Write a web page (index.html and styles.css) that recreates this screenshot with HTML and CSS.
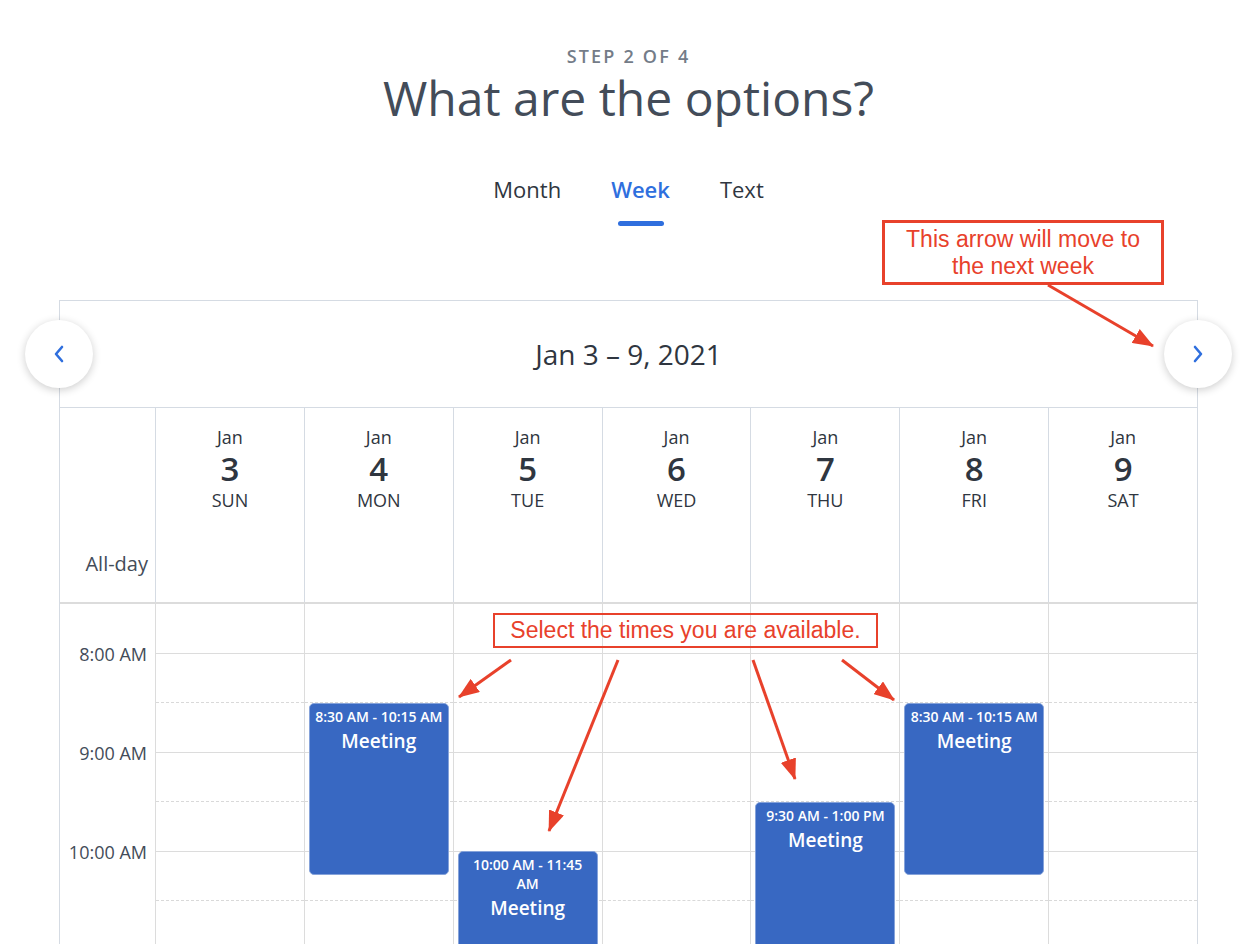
FILE: index.html
```html
<!DOCTYPE html>
<html lang="en">
<head>
<meta charset="utf-8">
<title>What are the options?</title>
<link rel="stylesheet" href="styles.css">
</head>
<body>
<div class="page">
  <header class="intro">
    <div class="step">STEP 2 OF 4</div>
    <h1 class="title">What are the options?</h1>
    <nav class="tabs">
      <a class="tab">Month</a>
      <a class="tab active">Week</a>
      <a class="tab">Text</a>
    </nav>
  </header>

  <section class="calendar">
    <div class="cal-head">
      <button class="nav prev" aria-label="Previous week">
        <svg width="12" height="18" viewBox="0 0 12 18"><path d="M9 2 L3 9 L9 16" fill="none" stroke="#2f6fde" stroke-width="2.6" stroke-linecap="round" stroke-linejoin="round"/></svg>
      </button>
      <div class="range">Jan 3 – 9, 2021</div>
      <button class="nav next" aria-label="Next week">
        <svg width="12" height="18" viewBox="0 0 12 18"><path d="M3 2 L9 9 L3 16" fill="none" stroke="#2f6fde" stroke-width="2.6" stroke-linecap="round" stroke-linejoin="round"/></svg>
      </button>
    </div>

    <div class="day-row">
      <div class="allday">All-day</div>
      <div class="day"><span class="mon">Jan</span><span class="num">3</span><span class="dow">SUN</span></div>
      <div class="day"><span class="mon">Jan</span><span class="num">4</span><span class="dow">MON</span></div>
      <div class="day"><span class="mon">Jan</span><span class="num">5</span><span class="dow">TUE</span></div>
      <div class="day"><span class="mon">Jan</span><span class="num">6</span><span class="dow">WED</span></div>
      <div class="day"><span class="mon">Jan</span><span class="num">7</span><span class="dow">THU</span></div>
      <div class="day"><span class="mon">Jan</span><span class="num">8</span><span class="dow">FRI</span></div>
      <div class="day"><span class="mon">Jan</span><span class="num">9</span><span class="dow">SAT</span></div>
    </div>

    <div class="grid-body">
      <div class="gutter">
        <div class="hour">8:00 AM</div>
        <div class="hour">9:00 AM</div>
        <div class="hour">10:00 AM</div>
      </div>
      <div class="col">
        <div class="slot"></div><div class="slot half"></div><div class="slot"></div><div class="slot half"></div><div class="slot"></div><div class="slot half"></div><div class="slot"></div><div class="slot half"></div><div class="slot"></div>
      </div>
      <div class="col">
        <div class="slot"></div><div class="slot half"></div><div class="slot"></div><div class="slot half"></div><div class="slot"></div><div class="slot half"></div><div class="slot"></div><div class="slot half"></div><div class="slot"></div>
        <div class="event" style="top:99px;height:172px"><div class="ev-time">8:30 AM - 10:15 AM</div><div class="ev-title">Meeting</div></div>
      </div>
      <div class="col">
        <div class="slot"></div><div class="slot half"></div><div class="slot"></div><div class="slot half"></div><div class="slot"></div><div class="slot half"></div><div class="slot"></div><div class="slot half"></div><div class="slot"></div>
        <div class="event" style="top:247px;height:172px"><div class="ev-time">10:00 AM - 11:45 AM</div><div class="ev-title">Meeting</div></div>
      </div>
      <div class="col">
        <div class="slot"></div><div class="slot half"></div><div class="slot"></div><div class="slot half"></div><div class="slot"></div><div class="slot half"></div><div class="slot"></div><div class="slot half"></div><div class="slot"></div>
      </div>
      <div class="col">
        <div class="slot"></div><div class="slot half"></div><div class="slot"></div><div class="slot half"></div><div class="slot"></div><div class="slot half"></div><div class="slot"></div><div class="slot half"></div><div class="slot"></div>
        <div class="event" style="top:198px;height:345px"><div class="ev-time">9:30 AM - 1:00 PM</div><div class="ev-title">Meeting</div></div>
      </div>
      <div class="col">
        <div class="slot"></div><div class="slot half"></div><div class="slot"></div><div class="slot half"></div><div class="slot"></div><div class="slot half"></div><div class="slot"></div><div class="slot half"></div><div class="slot"></div>
        <div class="event" style="top:99px;height:172px"><div class="ev-time">8:30 AM - 10:15 AM</div><div class="ev-title">Meeting</div></div>
      </div>
      <div class="col">
        <div class="slot"></div><div class="slot half"></div><div class="slot"></div><div class="slot half"></div><div class="slot"></div><div class="slot half"></div><div class="slot"></div><div class="slot half"></div><div class="slot"></div>
      </div>
    </div>
  </section>

  <div class="note note-next">This arrow will move to<br>the next week</div>
  <div class="note note-select">Select the times you are available.</div>

  <svg class="arrows" width="1250" height="944" viewBox="0 0 1250 944">
    <defs>
      <marker id="head" markerUnits="userSpaceOnUse" markerWidth="22" markerHeight="16" refX="20" refY="8" orient="auto">
        <path d="M0 0 L21 8 L0 16 Z" fill="#e8412b"/>
      </marker>
    </defs>
    <g stroke="#e8412b" stroke-width="3" fill="none" marker-end="url(#head)">
      <line x1="1048" y1="285" x2="1153" y2="346"/>
      <line x1="511" y1="660" x2="459" y2="697"/>
      <line x1="618" y1="660" x2="549" y2="831"/>
      <line x1="753" y1="660" x2="795" y2="779"/>
      <line x1="842" y1="660" x2="894" y2="700"/>
    </g>
  </svg>
</div>
</body>
</html>
```

FILE: styles.css
```css
* { box-sizing: border-box; }

html, body {
  margin: 0;
  padding: 0;
  background: #ffffff;
}

body {
  font-family: "Open Sans", "Noto Sans", sans-serif;
  color: #2f3640;
  overflow: hidden;
  height: 944px;
}

.page {
  position: relative;
  padding: 0 52px 0 59px;
}

/* ---------- intro ---------- */
.intro {
  display: flex;
  flex-direction: column;
  align-items: center;
  padding-top: 46px;
}

.step {
  font-size: 18px;
  line-height: 20px;
  font-weight: 600;
  letter-spacing: 2.2px;
  color: #747c88;
}

.title {
  margin: 6px 0 0;
  font-size: 48px;
  line-height: 52px;
  font-weight: 400;
  color: #434c59;
}

.tabs {
  display: flex;
  gap: 50px;
  margin-top: 50px;
}

.tab {
  position: relative;
  font-size: 22px;
  line-height: 30px;
  padding-bottom: 22px;
  color: #2f3640;
  cursor: pointer;
}

.tab.active {
  color: #2f6fde;
  font-weight: 600;
}

.tab.active::after {
  content: "";
  position: absolute;
  left: 50%;
  bottom: 0;
  width: 46px;
  height: 5px;
  margin-left: -23px;
  border-radius: 3px;
  background: #2f6fde;
}

/* ---------- calendar ---------- */
.calendar {
  margin-top: 74px;
  border: 1px solid #d5dbe3;
  border-bottom: none;
}

.cal-head {
  height: 107px;
  display: flex;
  align-items: center;
  justify-content: space-between;
  border-bottom: 1px solid #d5dbe3;
}

.range {
  font-size: 28px;
  color: #2f3640;
}

.nav {
  width: 68px;
  height: 68px;
  border-radius: 50%;
  border: none;
  background: #ffffff;
  box-shadow: 0 2px 8px rgba(0, 0, 0, 0.2);
  display: flex;
  align-items: center;
  justify-content: center;
  padding: 0;
  cursor: pointer;
}

.nav.prev { margin-left: -35px; }
.nav.next { margin-right: -35px; }

.day-row {
  display: grid;
  grid-template-columns: 95px repeat(7, 1fr);
  height: 196px;
  border-bottom: 2px solid #dcdcdc;
}

.allday {
  display: flex;
  align-items: flex-end;
  justify-content: flex-end;
  padding: 0 7px 26px 0;
  font-size: 20px;
  line-height: 24px;
  color: #434c59;
}

.day {
  display: flex;
  flex-direction: column;
  align-items: center;
  border-left: 1px solid #d5dbe3;
  padding-top: 18px;
  color: #2f3640;
}

.mon, .dow {
  font-size: 18px;
  line-height: 22px;
}

.num {
  font-size: 33px;
  line-height: 38px;
  font-weight: 600;
  margin: 2px 0 1px;
}

.grid-body {
  display: grid;
  grid-template-columns: 95px repeat(7, 1fr);
}

.gutter {
  display: flex;
  flex-direction: column;
}

.hour {
  height: 99px;
  display: flex;
  align-items: center;
  justify-content: flex-end;
  padding-right: 8px;
  font-size: 18px;
  color: #434c59;
}

.col {
  position: relative;
  border-left: 1px solid #dcdcdc;
}

.slot {
  height: 49.5px;
  border-bottom: 1px solid #dcdcdc;
}

.slot.half {
  border-bottom: 1px dashed #d9d9d9;
}

.event {
  position: absolute;
  left: 4px;
  right: 4px;
  background: #3868c2;
  border: 1px solid #86a3da;
  border-radius: 5px;
  color: #ffffff;
  text-align: center;
  padding: 3px 3px 0;
}

.ev-time {
  font-size: 14px;
  line-height: 19px;
  font-weight: 600;
}

.ev-title {
  font-size: 19px;
  line-height: 26px;
  font-weight: 600;
  margin-top: 2px;
}

/* ---------- annotations ---------- */
.note {
  position: absolute;
  font-family: "Liberation Sans", Arial, sans-serif;
  color: #e8412b;
  border: 3px solid #e8412b;
  text-align: center;
  font-size: 23px;
}

.note-next {
  left: 882px;
  top: 220px;
  width: 282px;
  height: 65px;
  line-height: 27px;
  padding-top: 3px;
}

.note-select {
  left: 493px;
  top: 613px;
  width: 385px;
  height: 35px;
  border-width: 2px;
  line-height: 31px;
}

.arrows {
  position: absolute;
  left: 0;
  top: 0;
  pointer-events: none;
}
```
